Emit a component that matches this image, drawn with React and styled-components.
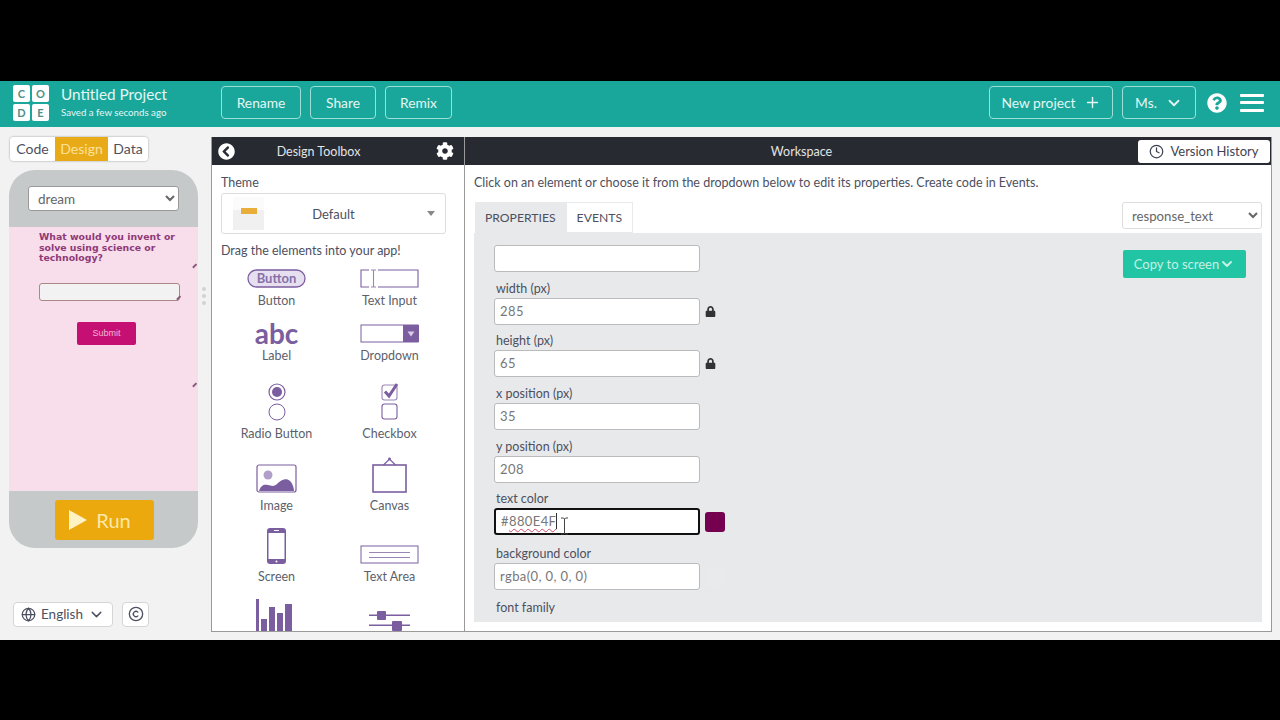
import styled, { createGlobalStyle } from 'styled-components';
import { ChevronDown, Clock, Copyright, Globe, Plus } from 'lucide-react';
import { FaChevronCircleLeft, FaCog, FaLock, FaQuestionCircle } from 'react-icons/fa';

const PURPLE = '#7B5E9F';

const fields = [
  { label: null, value: '' },
  { label: 'width (px)', value: '285', lock: true },
  { label: 'height (px)', value: '65', lock: true },
  { label: 'x position (px)', value: '35' },
  { label: 'y position (px)', value: '208' },
];

function ButtonIcon() {
  return (
    <svg width="59" height="19" viewBox="0 0 59 19">
      <rect x="1" y="1" width="57" height="17" rx="8.5" fill="#E6DFF0" stroke={PURPLE} strokeWidth="1.3" />
      <text x="29.5" y="14" textAnchor="middle" fontSize="13" fontWeight="700" fontFamily="Lato, sans-serif" fill="#8571A8">Button</text>
    </svg>
  );
}

function TextInputIcon() {
  return (
    <svg width="59" height="19" viewBox="0 0 59 19" fill="none" stroke={PURPLE}>
      <path d="M9 1H1V18H9M18 1H58V18H18" strokeWidth="1.1" />
      <path d="M11 1h5M13.5 1v17M11 18h5" strokeWidth="1.1" stroke="#9A86B6" />
    </svg>
  );
}

function LabelIcon() {
  return <AbcText>abc</AbcText>;
}

function DropdownIcon() {
  return (
    <svg width="59" height="19" viewBox="0 0 59 19">
      <rect x="1" y="1" width="57" height="17" fill="#fff" stroke={PURPLE} strokeWidth="1" />
      <rect x="43" y="1" width="16" height="17" fill={PURPLE} />
      <path d="M47.5 7.5h7l-3.5 5z" fill="#D9CEE8" />
    </svg>
  );
}

function RadioIcon() {
  return (
    <svg width="20" height="38" viewBox="0 0 20 38" fill="none" stroke={PURPLE}>
      <circle cx="10" cy="9" r="8" strokeWidth="1.2" />
      <circle cx="10" cy="9" r="5" fill={PURPLE} stroke="none" />
      <circle cx="10" cy="29" r="8" strokeWidth="1" />
    </svg>
  );
}

function CheckboxIcon() {
  return (
    <svg width="20" height="38" viewBox="0 0 20 38" fill="none" stroke={PURPLE}>
      <rect x="2" y="2" width="15" height="15" rx="2.5" strokeWidth="1.1" stroke="#9A86B6" />
      <path d="M5 8.5l4 4.5 8-12" strokeWidth="3" />
      <rect x="2" y="21" width="15" height="15" rx="2.5" strokeWidth="1.1" />
    </svg>
  );
}

function ImageIcon() {
  return (
    <svg width="41" height="29" viewBox="0 0 41 29">
      <rect x="1" y="1" width="39" height="27" rx="2" fill="#fff" stroke={PURPLE} strokeWidth="1.2" />
      <circle cx="12" cy="11" r="4.5" fill="#B09FC8" />
      <path d="M3 27c2-6 5-7 9-6 4 1 6 2 10-2s9-5 12-2c2 2 4 6 4 10z" fill={PURPLE} />
    </svg>
  );
}

function CanvasIcon() {
  return (
    <svg width="35" height="36" viewBox="0 0 35 36" fill="none" stroke={PURPLE}>
      <path d="M11.5 8l6-6 6 6" strokeWidth="1.2" />
      <circle cx="17.5" cy="2" r="1.4" fill={PURPLE} stroke="none" />
      <rect x="1" y="8" width="33" height="27" strokeWidth="1.6" />
    </svg>
  );
}

function ScreenIcon() {
  return (
    <svg width="19" height="36" viewBox="0 0 19 36">
      <rect x="0" y="0" width="19" height="36" rx="3" fill={PURPLE} />
      <rect x="1.5" y="5" width="16" height="26" fill="#fff" />
      <rect x="7" y="2" width="5" height="1" fill="#fff" />
      <circle cx="9.5" cy="33.5" r="1" fill="#fff" />
    </svg>
  );
}

function TextAreaIcon() {
  return (
    <svg width="59" height="19" viewBox="0 0 59 19" fill="none" stroke={PURPLE}>
      <rect x="1" y="1" width="57" height="17" strokeWidth="1" />
      <path d="M9 7.5h41M9 12.5h41" strokeWidth="1" stroke="#9A86B6" />
    </svg>
  );
}

function ChartIcon() {
  return (
    <ChartSvg width="36" height="32" viewBox="0 0 36 32" fill={PURPLE}>
      <rect x="0" y="0" width="3" height="32" />
      <rect x="5" y="20" width="6" height="12" />
      <rect x="13" y="8" width="6" height="24" />
      <rect x="21" y="14" width="6" height="18" />
      <rect x="29" y="5" width="7" height="27" />
    </ChartSvg>
  );
}

function SliderIcon() {
  return (
    <svg width="41" height="32" viewBox="0 0 41 32" fill={PURPLE}>
      <rect x="0" y="15.5" width="41" height="1.5" />
      <rect x="0" y="25.5" width="41" height="1.5" />
      <rect x="8" y="12" width="9" height="9" rx="1" />
      <rect x="23" y="22" width="10" height="10" rx="1" />
    </svg>
  );
}

const tools = [
  { name: 'Button', icon: <ButtonIcon />, h: 19 },
  { name: 'Text Input', icon: <TextInputIcon />, h: 19 },
  { name: 'Label', icon: <LabelIcon />, h: 20 },
  { name: 'Dropdown', icon: <DropdownIcon />, h: 20 },
  { name: 'Radio Button', icon: <RadioIcon />, h: 43 },
  { name: 'Checkbox', icon: <CheckboxIcon />, h: 43 },
  { name: 'Image', icon: <ImageIcon />, h: 37 },
  { name: 'Canvas', icon: <CanvasIcon />, h: 37 },
  { name: 'Screen', icon: <ScreenIcon />, h: 36 },
  { name: 'Text Area', icon: <TextAreaIcon />, h: 36 },
  { name: '', icon: <ChartIcon />, h: 32 },
  { name: '', icon: <SliderIcon />, h: 32 },
];

export default function App() {
  return (
    <Page>
      <GlobalStyle />
      <Header>
        <Logo>
          {['C', 'O', 'D', 'E'].map((l) => <LogoCell key={l}>{l}</LogoCell>)}
        </Logo>
        <ProjectInfo>
          <ProjectName>Untitled Project</ProjectName>
          <Saved>Saved a few seconds ago</Saved>
        </ProjectInfo>
        <HeaderButton $w={80}>Rename</HeaderButton>
        <HeaderButton $w={66}>Share</HeaderButton>
        <HeaderButton $w={67}>Remix</HeaderButton>
        <Spacer />
        <HeaderButton $w={124}>New project <Plus size={17} strokeWidth={2} /></HeaderButton>
        <HeaderButton $w={74}>Ms. <ChevronDown size={18} strokeWidth={2.4} /></HeaderButton>
        <HelpIcon><FaQuestionCircle size={20} /></HelpIcon>
        <Burger><i /><i /><i /></Burger>
      </Header>

      <Main>
        <LeftColumn>
          <ModeTabs>
            <ModeTab $w={45}>Code</ModeTab>
            <ModeTab $w={53} $active>Design</ModeTab>
            <ModeTab $w={40}>Data</ModeTab>
          </ModeTabs>
          <Phone>
            <PhoneTop>
              <ScreenSelect defaultValue="dream">
                <option value="dream">dream</option>
              </ScreenSelect>
            </PhoneTop>
            <AppScreen>
              <Question>What would you invent or solve using science or technology?</Question>
              <AnswerBox />
              <SubmitButton>Submit</SubmitButton>
              <ResizeMark $top={38} $left={183} />
              <ResizeMark $top={70} $left={167} />
              <ResizeMark $top={157} $left={183} />
            </AppScreen>
            <PhoneBottom>
              <RunButton>
                <svg width="18" height="20" viewBox="0 0 18 20"><path d="M0 0l18 10L0 20z" fill="#FFF3C4" /></svg>
                Run
              </RunButton>
            </PhoneBottom>
          </Phone>
          <DragHandle><i /><i /><i /></DragHandle>
          <FooterRow>
            <LangButton><Globe size={15} /> English <ChevronDown size={17} /></LangButton>
            <CopyrightButton><Copyright size={16} /></CopyrightButton>
          </FooterRow>
        </LeftColumn>

        <Toolbox>
          <PanelHeader>
            <FaChevronCircleLeft size={17} color="#fff" />
            <ToolboxTitle>Design Toolbox</ToolboxTitle>
            <FaCog size={18} color="#fff" />
          </PanelHeader>
          <ToolboxBody>
            <SmallLabel>Theme</SmallLabel>
            <ThemeSelect>
              <ThemeThumb><i /></ThemeThumb>
              <ThemeName>Default</ThemeName>
              <ThemeCaret />
            </ThemeSelect>
            <SmallLabel>Drag the elements into your app!</SmallLabel>
            <ToolGrid>
              {tools.map((t, i) => (
                <Tool key={i}>
                  <ToolIcon $h={t.h}>{t.icon}</ToolIcon>
                  <ToolName>{t.name}</ToolName>
                </Tool>
              ))}
            </ToolGrid>
          </ToolboxBody>
        </Toolbox>

        <Workspace>
          <WorkspaceHeader>
            <WorkspaceTitle>Workspace</WorkspaceTitle>
            <VersionButton><Clock size={15} strokeWidth={2} /> Version History</VersionButton>
          </WorkspaceHeader>
          <WorkspaceBody>
            <Hint>Click on an element or choose it from the dropdown below to edit its properties. Create code in Events.</Hint>
            <TabRow>
              <Tab $active>PROPERTIES</Tab>
              <Tab>EVENTS</Tab>
              <ElementSelect defaultValue="response_text">
                <option value="response_text">response_text</option>
              </ElementSelect>
            </TabRow>
            <PropertiesPane>
              <FieldColumn>
                {fields.map((f, i) => (
                  <FieldGroup key={i}>
                    {f.label && <FieldLabel>{f.label}</FieldLabel>}
                    <FieldRow>
                      <FieldBox>{f.value}</FieldBox>
                      {f.lock && <LockIcon><FaLock size={11} /></LockIcon>}
                    </FieldRow>
                  </FieldGroup>
                ))}
                <FieldGroup>
                  <FieldLabel>text color</FieldLabel>
                  <FieldRow>
                    <FieldBox $focused>
                      #<Misspelled>880E4F</Misspelled>
                      <TextCursor width="9" height="18" viewBox="0 0 9 18" fill="none" stroke="#444" strokeWidth="1">
                        <path d="M1 1h2.5l1 1 1-1H8M4.5 2v14M1 17h2.5l1-1 1 1H8" />
                      </TextCursor>
                    </FieldBox>
                    <Swatch $color="#74004F" />
                  </FieldRow>
                </FieldGroup>
                <FieldGroup $extra={2}>
                  <FieldLabel>background color</FieldLabel>
                  <FieldRow>
                    <FieldBox>rgba(0, 0, 0, 0)</FieldBox>
                    <Swatch $color="#E9EAEC" />
                  </FieldRow>
                </FieldGroup>
                <FieldGroup $extra={1}>
                  <FieldLabel>font family</FieldLabel>
                </FieldGroup>
              </FieldColumn>
              <CopyButton>Copy to screen<ChevronDown size={16} strokeWidth={3} /></CopyButton>
            </PropertiesPane>
          </WorkspaceBody>
        </Workspace>
      </Main>
    </Page>
  );
}

const GlobalStyle = createGlobalStyle`
  html, body {
    margin: 0;
    background: #000;
  }
  * {
    box-sizing: border-box;
  }
`;

const Page = styled.div`
  width: 1280px;
  height: 720px;
  padding: 81px 0 80px;
  background: #000;
  font-family: 'Lato', 'Liberation Sans', sans-serif;
  color: #4d5060;
  overflow: hidden;
`;

const Header = styled.header`
  height: 46px;
  background: #1AA79B;
  display: flex;
  align-items: center;
  padding: 0 16px 3px 13px;
  gap: 9px;
  color: #E4F6F3;
`;

const Logo = styled.div`
  display: grid;
  grid-template-columns: 17px 17px;
  grid-auto-rows: 17px;
  gap: 2px;
`;

const LogoCell = styled.div`
  background: #fff;
  border-radius: 2px;
  color: #4F8F8A;
  font-size: 11px;
  font-weight: 700;
  display: flex;
  align-items: center;
  justify-content: center;
`;

const ProjectInfo = styled.div`
  width: 151px;
  margin: 0 0 3px 3px;
  display: flex;
  flex-direction: column;
  gap: 4px;
`;

const ProjectName = styled.div`
  font-size: 15.3px;
  line-height: 18px;
`;

const Saved = styled.div`
  font-size: 9.7px;
  line-height: 11px;
`;

const HeaderButton = styled.div`
  width: ${(p) => p.$w}px;
  height: 33px;
  border: 1px solid #9BE0D6;
  border-radius: 4px;
  font-size: 13.8px;
  display: flex;
  align-items: center;
  justify-content: center;
  gap: 8px;
`;

const Spacer = styled.div`
  flex: 1;
`;

const HelpIcon = styled.div`
  display: flex;
  margin-left: 2px;
  color: #fff;
`;

const Burger = styled.div`
  width: 24px;
  margin-left: 4px;
  display: flex;
  flex-direction: column;
  gap: 4.5px;

  i {
    display: block;
    height: 3px;
    background: #fff;
    border-radius: 1px;
  }
`;

const Main = styled.div`
  height: 513px;
  background: #F2F2F2;
  display: flex;
  padding-top: 10px;
`;

const LeftColumn = styled.div`
  position: relative;
  width: 211px;
  flex: none;
  padding-left: 9px;
  display: flex;
  flex-direction: column;
`;

const ModeTabs = styled.div`
  display: flex;
  margin-left: 1px;
  width: 138px;
  height: 24px;
  border-radius: 4px;
  background: #fff;
  box-shadow: 0 0 2px #888;
  overflow: hidden;
`;

const ModeTab = styled.div`
  width: ${(p) => p.$w}px;
  padding-bottom: 2px;
  background: ${(p) => (p.$active ? '#E9AA17' : '#fff')};
  color: ${(p) => (p.$active ? '#FBE29A' : '#4d5060')};
  font-size: 14px;
  display: flex;
  align-items: center;
  justify-content: center;
`;

const Phone = styled.div`
  width: 189px;
  height: 378px;
  margin-top: 9px;
  border-radius: 26px;
  background: #C6C9C9;
  display: flex;
  flex-direction: column;
  overflow: hidden;
`;

const PhoneTop = styled.div`
  height: 57px;
  padding: 16px 0 0 19px;
`;

const ScreenSelect = styled.select`
  width: 151px;
  height: 25px;
  padding-left: 5px;
  font-family: inherit;
  font-size: 13.5px;
  color: #666;
  background: #fff;
  border: 1px solid #999;
  border-radius: 3px;
`;

const AppScreen = styled.div`
  position: relative;
  height: 264px;
  background: #F8DDEB;
  padding: 5px 0 0 30px;
`;

const Question = styled.div`
  width: 146px;
  font-family: 'DejaVu Sans', Verdana, sans-serif;
  font-size: 9.35px;
  font-weight: 700;
  line-height: 10.5px;
  color: #8E3A78;
`;

const AnswerBox = styled.div`
  width: 141px;
  height: 18px;
  margin-top: 19px;
  background: #F2F2F2;
  border: 1px solid #A88;
  border-radius: 3px;
`;

const SubmitButton = styled.div`
  width: 59px;
  height: 23px;
  margin: 21px 0 0 38px;
  background: #C60F72;
  color: #F4B4D4;
  font-family: 'Liberation Sans', sans-serif;
  font-size: 9px;
  border-radius: 2px;
  display: flex;
  align-items: center;
  justify-content: center;
`;

/* little resize corners on the app elements */
const ResizeMark = styled.i`
  position: absolute;
  top: ${(p) => p.$top}px;
  left: ${(p) => p.$left}px;
  width: 5px;
  height: 1.5px;
  background: #8a5a78;
  transform: rotate(-45deg);
`;

const PhoneBottom = styled.div`
  flex: 1;
  padding: 9px 0 0 46px;
`;

const RunButton = styled.div`
  width: 99px;
  height: 40px;
  padding-right: 9px;
  background: #EBA90E;
  border-radius: 3px;
  color: #FBE7A8;
  font-size: 20px;
  display: flex;
  align-items: center;
  justify-content: center;
  gap: 9px;
`;

const DragHandle = styled.div`
  position: absolute;
  top: 150px;
  left: 202px;
  display: flex;
  flex-direction: column;
  gap: 3px;

  i {
    display: block;
    width: 4px;
    height: 4px;
    border-radius: 50%;
    background: #D2D2D2;
  }
`;

const FooterRow = styled.div`
  margin-top: 54px;
  margin-left: 4px;
  display: flex;
  gap: 9px;
`;

const LangButton = styled.div`
  width: 100px;
  height: 25px;
  padding-bottom: 1px;
  background: #fff;
  border: 1px solid #D5D5D5;
  border-radius: 4px;
  font-size: 13.5px;
  color: #4d5060;
  display: flex;
  align-items: center;
  justify-content: center;
  gap: 5px;
`;

const CopyrightButton = styled(LangButton)`
  width: 27px;
`;

const Toolbox = styled.section`
  width: 254px;
  height: 495px;
  flex: none;
  background: #fff;
  border: 1px solid #9A9A9A;
  border-width: 0 1px 1px 1px;
  display: flex;
  flex-direction: column;
  overflow: hidden;
`;

const PanelHeader = styled.div`
  height: 28px;
  flex: none;
  background: #272A30;
  display: flex;
  align-items: center;
  justify-content: space-between;
  padding: 0 10px 0 6px;
`;

const PanelTitle = styled.div`
  color: #E2E3E5;
  font-size: 12.5px;
`;

const ToolboxTitle = styled(PanelTitle)`
  margin-right: 34px;
`;

const WorkspaceTitle = styled(PanelTitle)`
  flex: 1;
  text-align: center;
`;

const ToolboxBody = styled.div`
  padding: 10px 18px 0 9px;
`;

const SmallLabel = styled.div`
  font-size: 12.5px;
  line-height: 15px;
  color: #4d5060;
`;

const ThemeSelect = styled.div`
  height: 41px;
  margin: 3px 0 9px;
  border: 1px solid #DDD;
  border-radius: 3px;
  display: flex;
  align-items: center;
  padding: 0 10px 0 11px;
`;

const ThemeThumb = styled.div`
  width: 31px;
  height: 33px;
  background: linear-gradient(#FBFBFB 40%, #F0F0F0 40%);
  display: flex;
  justify-content: center;
  padding-top: 11px;

  i {
    display: block;
    width: 16px;
    height: 6px;
    background: #E9AE3A;
  }
`;

const ThemeName = styled.div`
  flex: 1;
  padding-right: 24px;
  text-align: center;
  font-size: 13px;
`;

const ThemeCaret = styled.div`
  width: 0;
  height: 0;
  border-left: 4.5px solid transparent;
  border-right: 4.5px solid transparent;
  border-top: 5px solid #888;
`;

const ToolGrid = styled.div`
  display: grid;
  grid-template-columns: 113px 113px;
  row-gap: 14px;
  margin: 11px 0 0 -1px;
`;

const Tool = styled.div`
  display: flex;
  flex-direction: column;
  align-items: center;
`;

const ToolIcon = styled.div`
  height: ${(p) => p.$h}px;
  display: flex;
  align-items: flex-end;
  justify-content: center;

  svg {
    display: block;
  }
`;

const ChartSvg = styled.svg`
  margin-right: 6px;
`;

const AbcText = styled.div`
  font-size: 28px;
  font-weight: 700;
  line-height: 20px;
  height: 20px;
  color: ${PURPLE};
`;

const ToolName = styled.div`
  font-size: 12.5px;
  line-height: 16px;
  margin-top: 5px;
  color: #5c5f6c;
`;

const Workspace = styled.section`
  width: 807px;
  height: 495px;
  flex: none;
  background: #fff;
  border-right: 1px solid #9A9A9A;
  border-bottom: 1px solid #9A9A9A;
  display: flex;
  flex-direction: column;
`;

const WorkspaceHeader = styled.div`
  height: 28px;
  flex: none;
  padding-right: 1px;
  background: #272A30;
  display: flex;
  align-items: center;
`;

const VersionButton = styled.div`
  width: 132px;
  height: 23px;
  background: #fff;
  border-radius: 3px;
  font-size: 13px;
  color: #3f4250;
  display: flex;
  align-items: center;
  justify-content: center;
  gap: 6px;
`;

const WorkspaceBody = styled.div`
  padding: 10px 9px 0 9px;
`;

const Hint = styled.div`
  font-size: 12.5px;
  line-height: 15px;
`;

const TabRow = styled.div`
  display: flex;
  align-items: flex-start;
  height: 31px;
  margin-top: 12px;
  padding-left: 1px;
`;

const Tab = styled.div`
  height: 31px;
  padding: 0 10px;
  background: ${(p) => (p.$active ? '#E7E9EB' : '#fff')};
  border: ${(p) => (p.$active ? 'none' : '1px solid #E7E9EB')};
  font-size: 12.2px;
  display: flex;
  align-items: center;
`;

const ElementSelect = styled.select`
  width: 140px;
  height: 27px;
  margin-left: auto;
  padding-left: 5px;
  font-family: inherit;
  font-size: 13.2px;
  color: #666;
  background: #fff;
  border: 1px solid #DDD;
  border-radius: 3px;
`;

const PropertiesPane = styled.div`
  height: 389px;
  background: #E7E9EB;
  padding: 12px 16px 0 20px;
  display: flex;
  justify-content: space-between;
  align-items: flex-start;
  overflow: hidden;
`;

const FieldColumn = styled.div`
  display: flex;
  flex-direction: column;
  gap: 9.7px;
`;

const FieldGroup = styled.div`
  margin-top: ${(p) => p.$extra || 0}px;
  display: flex;
  flex-direction: column;
`;

const FieldLabel = styled.div`
  font-size: 12.5px;
  line-height: 16px;
  margin-top: -1px;
  padding-bottom: 1px;
  padding-left: 2px;
`;

const FieldRow = styled.div`
  display: flex;
  align-items: center;
`;

const FieldBox = styled.div`
  position: relative;
  width: 206px;
  height: 27px;
  padding: 0 0 1px 5px;
  background: #fff;
  border: ${(p) => (p.$focused ? '2px solid #111' : '1px solid #BBB')};
  border-radius: 3px;
  font-size: 13px;
  letter-spacing: 0.4px;
  color: #777;
  display: flex;
  align-items: center;
`;

const Misspelled = styled.span`
  text-decoration: underline wavy #D04A6A 1px;
  text-underline-offset: 2px;
  border-right: 1px solid #333;
`;

const TextCursor = styled.svg`
  position: absolute;
  left: 64px;
  top: 7px;
`;

const LockIcon = styled.div`
  display: flex;
  margin-left: 5px;
  color: #333;
`;

const Swatch = styled.div`
  width: 20px;
  height: 20px;
  margin-left: 5px;
  border-radius: 3px;
  background: ${(p) => p.$color};
`;

const CopyButton = styled.div`
  width: 123px;
  height: 28px;
  margin-top: 5px;
  background: #21C5A3;
  border-radius: 2px;
  color: #C4F0E4;
  font-size: 13px;
  display: flex;
  align-items: center;
  justify-content: center;
`;
